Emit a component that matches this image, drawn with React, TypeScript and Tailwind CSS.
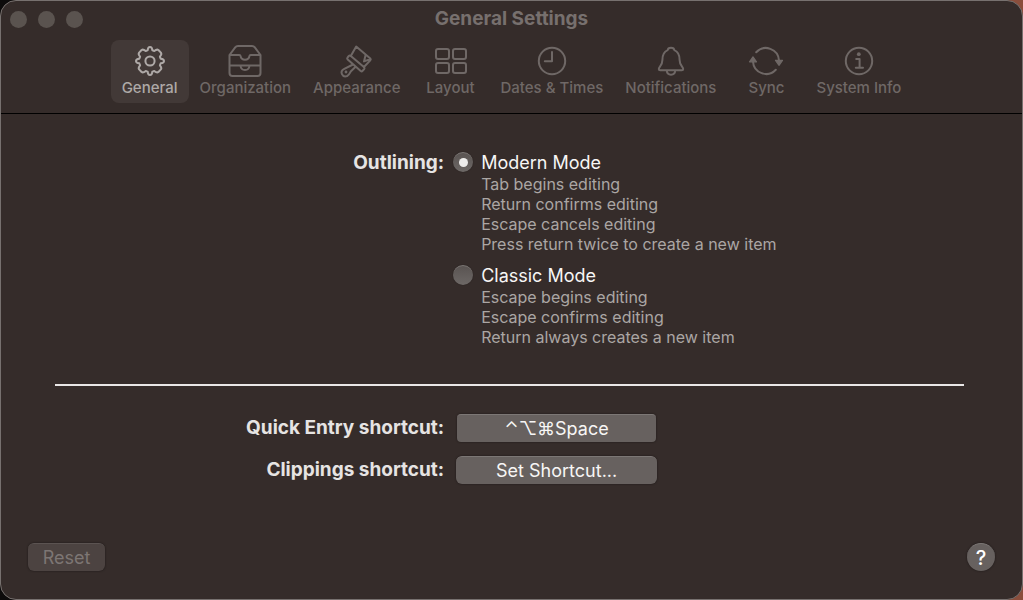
import { useState } from "react";
import type { ReactNode } from "react";

function Icon({ children }: { children: ReactNode }) {
  return (
    <svg
      viewBox="0 0 36 36"
      className="h-9 w-9"
      fill="none"
      stroke="currentColor"
      strokeWidth="2"
      strokeLinecap="round"
      strokeLinejoin="round"
      aria-hidden="true"
    >
      {children}
    </svg>
  );
}

const tabs: { name: string; icon: ReactNode }[] = [
  {
    name: "General",
    icon: (
      <>
        <circle cx="18" cy="18" r="4.6" />
        <path d="M15.7 7.3 Q15.9 4 18 4 Q20.1 4 20.3 7.3 Q21.2 7.6 22.3 8.1 Q24.8 5.9 26.4 7 L28.9 9.6 Q30.1 11.2 27.9 13.7 Q28.4 14.7 28.7 15.7 Q32 15.9 32 18 Q32 20.1 28.7 20.3 Q28.4 21.3 27.9 22.3 Q30.1 24.8 28.9 26.4 L26.4 29 Q24.8 30.1 22.3 27.9 Q21.3 28.4 20.3 28.7 Q20.1 32 18 32 Q15.9 32 15.7 28.7 Q14.7 28.4 13.7 27.9 Q11.2 30.1 9.6 29 L7.1 26.4 Q5.9 24.8 8.1 22.3 Q7.6 21.3 7.3 20.3 Q4 20.1 4 18 Q4 15.9 7.3 15.7 Q7.6 14.7 8.1 13.7 Q5.9 11.2 7.1 9.6 L9.6 7 Q11.2 5.9 13.7 8.1 Q14.7 7.6 15.7 7.3 Z" />
      </>
    ),
  },
  {
    name: "Organization",
    icon: (
      <path d="M2.5 12 L8.2 4.3 Q9.2 3 11 3 H25 Q26.8 3 27.8 4.3 L33.5 12 V30 Q33.5 33 30.5 33 H5.5 Q2.5 33 2.5 30 Z M2.5 12 H12.3 Q13.4 12 13.6 13.2 C14 15.8 15.5 16.8 18 16.8 C20.5 16.8 22 15.8 22.4 13.2 Q22.6 12 23.7 12 H33.5 M2.5 22.5 H33.5 M13.4 22.5 C13.8 25.8 15.5 27 18 27 C20.5 27 22.2 25.8 22.6 22.5" />
    ),
  },
  {
    name: "Appearance",
    icon: (
      <>
        <path d="M17.2 3.5 L31.3 15.5 Q32.2 16.4 31.3 17.4 L24.9 24 L11.8 12.9 Z M31 16.3 L25 18.4 L26.6 11.9" />
        <path d="M11.8 12.9 Q10.7 12 9.8 13 L8.5 14.6 Q7.7 15.7 8.7 16.6 L21.7 28 Q22.7 28.8 23.6 27.8 L25.2 26.1 Q26 25 24.9 24 M14 21.5 L5.3 25.8 C0 28.5 3.3 34.8 8.2 33 C10.3 32.1 10.7 30.3 11.7 28.5 L16.6 23.8" />
        <circle cx="7" cy="29" r="1.4" fill="currentColor" stroke="none" />
      </>
    ),
  },
  {
    name: "Layout",
    icon: (
      <>
        <rect x="3" y="6" width="13" height="10" rx="2" />
        <rect x="20" y="6" width="13" height="10" rx="2" />
        <rect x="3" y="20" width="13" height="10" rx="2" />
        <rect x="20" y="20" width="13" height="10" rx="2" />
      </>
    ),
  },
  {
    name: "Dates & Times",
    icon: (
      <>
        <circle cx="18" cy="18" r="13.2" />
        <path d="M18 9 V18.2 H10.8" />
      </>
    ),
  },
  {
    name: "Notifications",
    icon: (
      <path d="M14.6 7.2 C15 3.8 21 3.8 21.4 7.2 C25.5 9 26.6 12 26.6 17 C26.6 22.5 30 23.5 30.2 26 Q30.2 27.2 28.8 27.2 H7.2 Q5.8 27.2 5.8 26 C6 23.5 9.4 22.5 9.4 17 C9.4 12 10.5 9 14.6 7.2 Z M13.8 27.5 C14 33 22 33 22.2 27.5" />
    ),
  },
  {
    name: "Sync",
    icon: (
      <>
        <path d="M8.2 9.2 A13.2 13.2 0 0 1 31 17.5 M5 18.5 A13.2 13.2 0 0 0 27.8 26.8" />
        <path
          d="M31 22.3 L27.5 17.3 H34.5 Z M5 13.8 L1.5 18.8 H8.5 Z"
          fill="currentColor"
          strokeWidth="1.2"
        />
      </>
    ),
  },
  {
    name: "System Info",
    icon: (
      <>
        <circle cx="18" cy="18" r="13.2" />
        <circle cx="17.8" cy="11.2" r="1.9" fill="currentColor" stroke="none" />
        <path d="M15.2 16 H18.6 V24.5 M14.8 24.7 H22" />
      </>
    ),
  },
];

const modes = [
  {
    id: "modern",
    name: "Modern Mode",
    notes: [
      "Tab begins editing",
      "Return confirms editing",
      "Escape cancels editing",
      "Press return twice to create a new item",
    ],
  },
  {
    id: "classic",
    name: "Classic Mode",
    notes: [
      "Escape begins editing",
      "Escape confirms editing",
      "Return always creates a new item",
    ],
  },
];

function Toolbar() {
  const [active, setActive] = useState("General");
  return (
    <nav className="flex justify-center">
      {tabs.map((tab) => (
        <button
          key={tab.name}
          type="button"
          aria-pressed={tab.name === active}
          onClick={() => setActive(tab.name)}
          className={
            "flex h-[63px] min-w-[78px] flex-col items-center rounded-lg px-[11px] pt-[3px] text-[15px] leading-[18px] font-medium whitespace-nowrap " +
            (tab.name === active ? "bg-[#423937] text-[#aea9a7]" : "text-[#6f6866]")
          }
        >
          <Icon>{tab.icon}</Icon>
          {tab.name}
        </button>
      ))}
    </nav>
  );
}

function Outlining() {
  const [mode, setMode] = useState("modern");
  return (
    <fieldset className="grid grid-cols-[444fr_579fr]" aria-labelledby="outlining">
      <span id="outlining" className="text-right text-[19px] leading-6 font-bold text-[#e6e4e3]">
        Outlining:
      </span>
      <div className="flex flex-col gap-[10px] pl-[9px]">
        {modes.map((m) => (
          <div key={m.id} className="grid grid-cols-[20px_1fr] gap-x-2">
            <input
              type="radio"
              id={m.id}
              name="outlining"
              checked={mode === m.id}
              onChange={() => setMode(m.id)}
              className="mt-px flex h-5 w-5 appearance-none items-center justify-center rounded-full border-t border-[#7b7674] bg-linear-to-b from-[#5a5452] to-[#6d6866] shadow-[0_0_1px_#1a1514] checked:before:h-[9px] checked:before:w-[9px] checked:before:rounded-full checked:before:bg-[#eeedec] checked:before:content-['']"
            />
            <label htmlFor={m.id} className="text-lg leading-[23px] text-[#f7f6f5]">
              {m.name}
            </label>
            <div className="col-start-2 text-base leading-5 text-[#aba6a4]">
              {m.notes.map((note) => (
                <p key={note}>{note}</p>
              ))}
            </div>
          </div>
        ))}
      </div>
    </fieldset>
  );
}

function Shortcut({
  id,
  label,
  children,
  recorded = false,
}: {
  id: string;
  label: string;
  children: ReactNode;
  recorded?: boolean;
}) {
  return (
    <div className="grid grid-cols-[444fr_579fr] items-center">
      <label htmlFor={id} className="text-right text-[19px] leading-6 font-bold text-[#e6e4e3]">
        {label}
      </label>
      <div className="flex pl-3">
        <button
          id={id}
          type="button"
          className={
            "h-7 border-t border-[#7c7775] bg-[#67615f] text-lg leading-6 text-[#f7f6f5] shadow-[0_0_2px_#1a1514] " +
            (recorded ? "mx-px w-[199px] rounded-sm" : "w-[201px] rounded-md")
          }
        >
          {children}
        </button>
      </div>
    </div>
  );
}

export default function App() {
  return (
    <div className="flex min-h-screen bg-linear-to-r from-[#0d0b0b] from-50% to-[#8a4e3c] to-50% font-['Inter',sans-serif]">
      <main className="flex flex-1 flex-col rounded-2xl border border-[#77716f] bg-[#352c2a]">
        <header className="border-b border-black">
          <div className="grid grid-cols-[1fr_auto_1fr] items-center px-[9px] pt-1 pb-[7px]">
            <div className="flex gap-[11px]">
              <span className="h-[17px] w-[17px] rounded-full bg-[#5a534f]" />
              <span className="h-[17px] w-[17px] rounded-full bg-[#5a534f]" />
              <span className="h-[17px] w-[17px] rounded-full bg-[#5a534f]" />
            </div>
            <h1 className="text-[19px] leading-7 font-bold text-[#77706e]">General Settings</h1>
          </div>
          <div className="pb-[10px]">
            <Toolbar />
          </div>
        </header>
        <div className="flex flex-1 flex-col pt-[37px]">
          <Outlining />
          <hr className="mt-[37px] mr-[58px] mb-7 ml-[54px] border-t-2 border-[#e9e7e6]" />
          <div className="flex flex-col gap-[14px]">
            <Shortcut id="quick-entry" label="Quick Entry shortcut:" recorded>
              ⌃⌥⌘Space
            </Shortcut>
            <Shortcut id="clippings" label="Clippings shortcut:">
              Set Shortcut...
            </Shortcut>
          </div>
        </div>
        <footer className="flex items-center justify-between px-[27px] pb-7">
          <button
            type="button"
            disabled
            className="h-7 w-[77px] rounded-md border-t border-[#5b5351] bg-[#4c4341] text-lg leading-6 text-[#7d7674] shadow-[0_0_2px_#1a1514]"
          >
            Reset
          </button>
          <button
            type="button"
            aria-label="Help"
            className="h-7 w-7 rounded-full border-t border-[#7c7775] bg-[#67615f] text-xl leading-6 font-medium text-white shadow-[0_0_2px_#1a1514]"
          >
            ?
          </button>
        </footer>
      </main>
    </div>
  );
}
